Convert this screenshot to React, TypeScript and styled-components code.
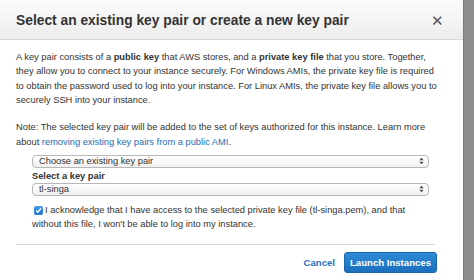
import React from "react";
import styled, { createGlobalStyle } from "styled-components";

const Global = createGlobalStyle`
  html, body { margin: 0; padding: 0; background: #fff; }
  body { font-family: "Liberation Sans", Arial, sans-serif; color: #333; }
`;

const Page = styled.div`
  display: flex;
  width: 474px;
  height: 280px;
  overflow: hidden;
`;

const Modal = styled.div`
  flex: 1;
  display: flex;
  flex-direction: column;
  background: #fff;
`;

const Backdrop = styled.div`
  width: 10px;
  background: #8d8d8f;
  border-left: 1px solid #7a7a7c;
`;

const Header = styled.div`
  height: 40px;
  box-sizing: border-box;
  display: flex;
  align-items: center;
  justify-content: space-between;
  padding: 2px 19px 0 16px;
  background: linear-gradient(#fcfcfc, #ececec);
  border-bottom: 1px solid #d8d8d8;
`;

const Title = styled.h1`
  margin: 0;
  font-size: 13.8px;
  font-weight: bold;
  color: #333;
`;

const Close = styled.span`
  font-size: 15px;
  color: #555;
  line-height: 1;
`;

const Body = styled.div`
  padding: 10px 0 0 16px;
  width: 430px;
  font-size: 9.3px;
  line-height: 14.4px;
  color: #333;
  white-space: nowrap;
`;

const Para = styled.p<{ $gap: number }>`
  margin: 0 0 ${(p) => p.$gap}px 0;
`;

const Link = styled.a`
  color: #1c6db5;
  text-decoration: none;
`;

const Form = styled.div`
  padding: 0 0 0 32px;
  width: 397px;
  display: flex;
  flex-direction: column;
`;

const Select = styled.div`
  height: 13px;
  box-sizing: border-box;
  border: 1px solid #b8b8b8;
  border-radius: 4px;
  background: linear-gradient(#ffffff, #f0f0f0);
  display: flex;
  align-items: center;
  justify-content: space-between;
  padding: 0 4px 0 6px;
  font-size: 9.3px;
  color: #333;
`;

const Label = styled.div`
  font-size: 9.3px;
  font-weight: bold;
  color: #333;
  line-height: 14px;
  margin-top: 1px;
`;

const Ack = styled.div`
  margin-top: 7px;
  font-size: 9.3px;
  line-height: 14.5px;
  color: #333;
  white-space: nowrap;
`;

const Check = styled.span`
  display: inline-flex;
  vertical-align: -1px;
  width: 9px;
  height: 9px;
  margin: 0 2px 0 2px;
  border-radius: 2px;
  background: linear-gradient(#4a9ee8, #1c75cf);
  align-items: center;
  justify-content: center;
`;

const Divider = styled.hr`
  margin: 12px 28px 0 16px;
  border: 0;
  border-top: 1px solid #dcd6d6;
`;

const Footer = styled.div`
  display: flex;
  justify-content: flex-end;
  align-items: center;
  gap: 9px;
  padding: 7px 26px 0 0;
`;

const Cancel = styled.a`
  font-size: 9.6px;
  font-weight: bold;
  color: #1f74bd;
`;

const Primary = styled.button`
  height: 21px;
  width: 93px;
  padding: 0;
  border: 1px solid #1766ae;
  border-radius: 3px;
  background: linear-gradient(#2e8ad6, #1b6fbe);
  color: #fff;
  font-family: "Liberation Sans", Arial, sans-serif;
  font-size: 9.6px;
  font-weight: bold;
`;

const Arrows = () => (
  <svg width="5" height="8" viewBox="0 0 6 9">
    <path d="M0.5 3.5 L3 0.5 L5.5 3.5 Z" fill="#444" />
    <path d="M0.5 5.5 L3 8.5 L5.5 5.5 Z" fill="#444" />
  </svg>
);

export default function App() {
  return (
    <Page>
      <Global />
      <Modal>
        <Header>
          <Title>Select an existing key pair or create a new key pair</Title>
          <Close>✕</Close>
        </Header>
        <Body>
          <Para $gap={12.5}>
            A key pair consists of a <b>public key</b> that AWS stores, and a <b>private key file</b> that you store. Together,
            <br />
            they allow you to connect to your instance securely. For Windows AMIs, the private key file is required
            <br />
            to obtain the password used to log into your instance. For Linux AMIs, the private key file allows you to
            <br />
            securely SSH into your instance.
          </Para>
          <Para $gap={6}>
            Note: The selected key pair will be added to the set of keys authorized for this instance. Learn more
            <br />
            about <Link>removing existing key pairs from a public AMI</Link>.
          </Para>
        </Body>
        <Form>
          <Select>
            <span>Choose an existing key pair</span>
            <Arrows />
          </Select>
          <Label>Select a key pair</Label>
          <Select>
            <span>tl-singa</span>
            <Arrows />
          </Select>
          <Ack>
            <Check>
              <svg width="7" height="7" viewBox="0 0 8 8">
                <path d="M1.3 4.2 L3.2 6 L6.8 1.6" stroke="#fff" strokeWidth="1.6" fill="none" />
              </svg>
            </Check>
            I acknowledge that I have access to the selected private key file (tl-singa.pem), and that
            <br />
            without this file, I won't be able to log into my instance.
          </Ack>
        </Form>
        <Divider />
        <Footer>
          <Cancel>Cancel</Cancel>
          <Primary>Launch Instances</Primary>
        </Footer>
      </Modal>
      <Backdrop />
    </Page>
  );
}
